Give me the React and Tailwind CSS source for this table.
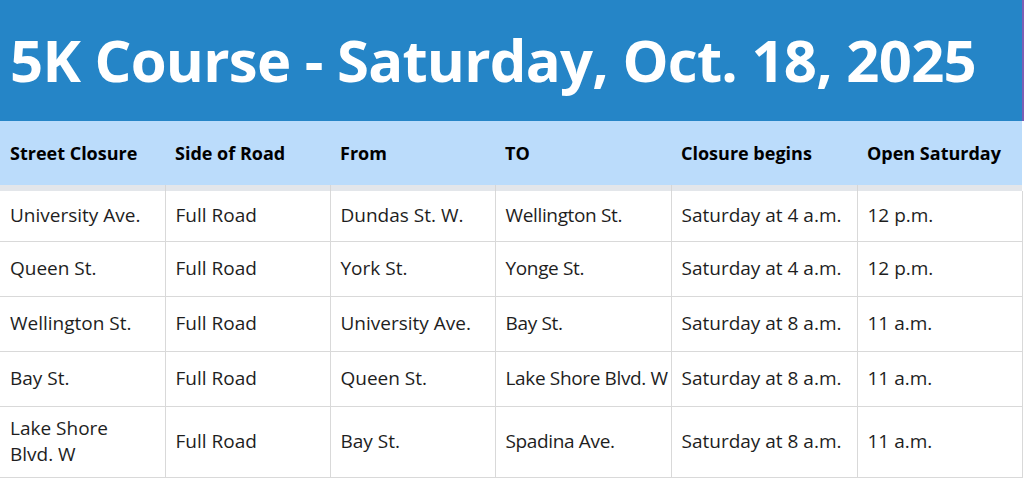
import React from "react";

const rows = [
  ["University Ave.", "Full Road", "Dundas St. W.", "Wellington St.", "Saturday at 4 a.m.", "12 p.m."],
  ["Queen St.", "Full Road", "York St.", "Yonge St.", "Saturday at 4 a.m.", "12 p.m."],
  ["Wellington St.", "Full Road", "University Ave.", "Bay St.", "Saturday at 8 a.m.", "11 a.m."],
  ["Bay St.", "Full Road", "Queen St.", "Lake Shore Blvd. W", "Saturday at 8 a.m.", "11 a.m."],
  ["Lake Shore Blvd. W", "Full Road", "Bay St.", "Spadina Ave.", "Saturday at 8 a.m.", "11 a.m."],
];

const heads = ["Street Closure", "Side of Road", "From", "TO", "Closure begins", "Open Saturday"];
const widths = ["w-[165px]", "w-[165px]", "w-[165px]", "w-[176px]", "w-[186px]", "w-[165px]"];
const rowHeights = ["h-[50px]", "h-[55px]", "h-[55px]", "h-[55px]", "h-[71px]"];

// Course title banner
const Banner = () => (
  <div className="h-[121px] bg-[#2585c7] border-r-2 border-[#7d5fb5] flex items-center pl-[10px] pb-[2px]">
    <h1 className="text-white font-bold text-[58px] tracking-[-0.75px] leading-none">
      5K Course - Saturday, Oct. 18, 2025
    </h1>
  </div>
);

export default function App() {
  return (
    <div className="w-[1024px] h-[480px] overflow-hidden bg-white" style={{ fontFamily: '"Open Sans", "Noto Sans", sans-serif' }}>
      <Banner />
      <table className="table-fixed border-collapse w-[1022px] text-[#1e1e1e]">
        <thead>
          <tr className="bg-[#bbdcfb]">
            {heads.map((h, i) => (
              <th key={h} className={`${widths[i]} h-[64px] px-[10px] text-left font-bold text-[18px] text-black whitespace-nowrap`}>
                {h}
              </th>
            ))}
          </tr>
          <tr className="bg-[#e3e6ea]">
            {heads.map((h, i) => (
              <th key={h} className={`h-[6px] p-0 ${i > 0 ? "border-l border-[#d6d6d6]" : ""}`}></th>
            ))}
          </tr>
        </thead>
        <tbody>
          {rows.map((r, ri) => (
            <tr key={ri} className={rowHeights[ri]}>
              {r.map((c, ci) => (
                <td
                  key={ci}
                  className={`px-[10px] pt-0 pb-[2px] text-[19px] leading-[26px] border-b border-[#d9d9d9] ${ci > 0 ? "border-l" : ""} ${ci === 5 ? "border-r" : ""} ${ci === 3 ? "whitespace-nowrap pr-0 tracking-[-0.35px]" : ""}`}
                >
                  {c}
                </td>
              ))}
            </tr>
          ))}
        </tbody>
      </table>
    </div>
  );
}
